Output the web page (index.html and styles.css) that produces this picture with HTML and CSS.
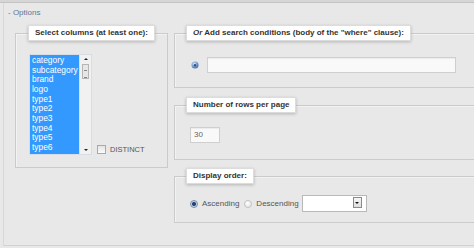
FILE: index.html
```html
<!DOCTYPE html>
<html>
<head>
<meta charset="utf-8">
<title>Options</title>
<link rel="stylesheet" href="styles.css">
</head>
<body>

<div class="topbar"></div>

<div class="options">
  <div class="options-title">- Options</div>

  <div class="cols">

    <fieldset class="box box-columns">
      <legend>Select columns (at least one):</legend>
      <div class="colsel-row">
        <div class="colsel">
          <div class="colsel-items">
            <div>category</div>
            <div>subcategory</div>
            <div>brand</div>
            <div>logo</div>
            <div>type1</div>
            <div>type2</div>
            <div>type3</div>
            <div>type4</div>
            <div>type5</div>
            <div>type6</div>
          </div>
          <div class="scroll">
            <span class="arrow-up"></span>
            <span class="thumb"></span>
            <span class="arrow-down"></span>
          </div>
        </div>
        <label class="distinct"><span class="check"></span>DISTINCT</label>
      </div>
    </fieldset>

    <div class="right">

      <fieldset class="box box-where">
        <legend><i>Or</i> Add search conditions (body of the "where" clause):</legend>
        <div class="where-row">
          <svg class="help" width="8" height="8" viewBox="0 0 8 8">
            <defs>
              <radialGradient id="hg" cx="0.4" cy="0.35" r="0.7">
                <stop offset="0" stop-color="#dbe7f6"/>
                <stop offset="0.55" stop-color="#7b9fd0"/>
                <stop offset="1" stop-color="#3d63a3"/>
              </radialGradient>
            </defs>
            <circle cx="4" cy="4" r="3.5" fill="url(#hg)"/>
            <circle cx="4" cy="4.3" r="1.2" fill="#2c4f8f"/>
          </svg>
          <span class="text-input where-input"></span>
        </div>
      </fieldset>

      <fieldset class="box box-rows">
        <legend>Number of rows per page</legend>
        <span class="text-input rows-input">30</span>
      </fieldset>

      <fieldset class="box box-order">
        <legend>Display order:</legend>
        <div class="order-row">
          <span class="radio checked"></span><span class="radio-label">Ascending</span>
          <span class="radio"></span><span class="radio-label">Descending</span>
          <span class="dropdown"><span class="dropdown-btn"></span></span>
        </div>
      </fieldset>

    </div>
  </div>
</div>

</body>
</html>
```

FILE: styles.css
```css
html, body {
    margin: 0;
}

body {
    background: #e8e8e8;
    font-family: "Liberation Sans", Arial, sans-serif;
    font-size: 8px;
    color: #444;
    width: 474px;
    height: 248px;
    overflow: hidden;
}

.topbar {
    height: 2px;
    background: #d6d6d6;
    border-bottom: 1px solid #c4c4c4;
}

.options {
    margin-left: 3px;
    border-left: 1px solid #d8d8d8;
    border-bottom: 1px solid #d2d2d2;
    padding: 5px 0 22px 4px;
}

.options-title {
    line-height: 10px;
    color: #58789a;
    margin-bottom: 7px;
}

.cols {
    display: flex;
    align-items: flex-start;
    margin-left: 7px;
}

/* fieldsets */

.box {
    margin: 0;
    min-width: 0;
    border: 1px solid #cbcbcb;
    padding: 0 0 0 11px;
    box-shadow: inset 1px 1px 0 #f2f2f2;
}

.box legend {
    padding: 2px 6px;
    line-height: 10px;
    background: #fff;
    border: 1px solid #dcdcdc;
    box-shadow: 0 1px 3px rgba(0, 0, 0, 0.22);
    font-weight: bold;
    color: #333;
}

.box legend i {
    font-weight: bold;
}

.box-columns {
    width: 153px;
    box-sizing: border-box;
    padding: 13px 0 12px 12px;
}

.right {
    flex: 1;
    margin-left: 6px;
}

.right .box {
    border-right: none;
}

/* column list */

.colsel-row {
    display: flex;
    align-items: flex-end;
}

.colsel {
    display: flex;
    width: 63px;
    height: 101px;
    box-sizing: border-box;
    margin-left: 1px;
    border: 1px solid #d6dde6;
    background: #fff;
}

.colsel-items {
    flex: 1;
    background: #3399ff;
    color: #fff;
    font-size: 8.4px;
    line-height: 9.67px;
    padding: 1px 0 0 2px;
    overflow: hidden;
}

.scroll {
    width: 11px;
    background: #f1f1f1;
    border-left: 1px solid #dedede;
    display: flex;
    flex-direction: column;
    align-items: center;
}

.arrow-up {
    margin-top: 3px;
    border-left: 2px solid transparent;
    border-right: 2px solid transparent;
    border-bottom: 2px solid #222;
}

.thumb {
    width: 7px;
    height: 15px;
    margin-top: 4px;
    box-sizing: border-box;
    border: 1px solid #b5b5b5;
    background: repeating-linear-gradient(#e6e6e6 0 5px, #888 5px 6px, #e6e6e6 6px 7px) 1px 0 / 3px 100% no-repeat #e6e6e6;
}

.arrow-down {
    margin-top: auto;
    margin-bottom: 3px;
    border-left: 2px solid transparent;
    border-right: 2px solid transparent;
    border-top: 2px solid #222;
}

.distinct {
    display: flex;
    align-items: center;
    margin: 0 0 1px 5px;
    color: #555;
    font-size: 7.5px;
}

.check {
    width: 7px;
    height: 7px;
    border: 1px solid #a9a9a9;
    background: linear-gradient(#e4e4e4, #fbfbfb);
    margin-right: 4px;
}

/* inputs */

.text-input {
    display: block;
    height: 16px;
    box-sizing: border-box;
    background: #f9f9f9;
    border: 1px solid #cfcfcf;
    box-shadow: inset 0 1px 1px rgba(0, 0, 0, 0.06);
}

.box-where {
    padding-top: 16px;
    padding-bottom: 14px;
}

.where-row {
    display: flex;
    align-items: center;
}

.help {
    margin-left: 5px;
}

.where-input {
    width: 249px;
    margin-left: 8px;
}

.box-rows {
    margin-top: 9px;
    padding-top: 14px;
    padding-bottom: 16px;
}

.rows-input {
    width: 30px;
    margin-left: 4px;
    padding-left: 3px;
    line-height: 14px;
    color: #666;
}

.box-order {
    margin-top: 8px;
    padding-top: 11px;
    padding-bottom: 10px;
}

.order-row {
    display: flex;
    align-items: center;
    color: #555;
}

.radio {
    width: 6px;
    height: 6px;
    border-radius: 50%;
    border: 1px solid #c2c2c2;
    background: radial-gradient(circle at 40% 35%, #fff, #e0e0e0);
}

.radio.checked {
    margin-left: 4px;
    border-color: #7a8fa8;
    background: radial-gradient(circle at 50% 50%, #24467f 0 1.8px, #c8d4e4 2.3px);
}

.radio-label {
    margin: 0 5px 0 4px;
}

.dropdown {
    position: relative;
    width: 65px;
    height: 17px;
    box-sizing: border-box;
    margin-left: -2px;
    background: #fff;
    border: 1px solid #b9b9b9;
}

.dropdown-btn {
    position: absolute;
    right: 4px;
    top: 1px;
    width: 9px;
    height: 11px;
    box-sizing: border-box;
    border: 1px solid #8a8a8a;
    background: linear-gradient(#f6f6f6, #dedede);
}

.dropdown-btn::after {
    content: "";
    position: absolute;
    left: 1.5px;
    top: 4px;
    border-left: 2px solid transparent;
    border-right: 2px solid transparent;
    border-top: 2px solid #111;
}
```
